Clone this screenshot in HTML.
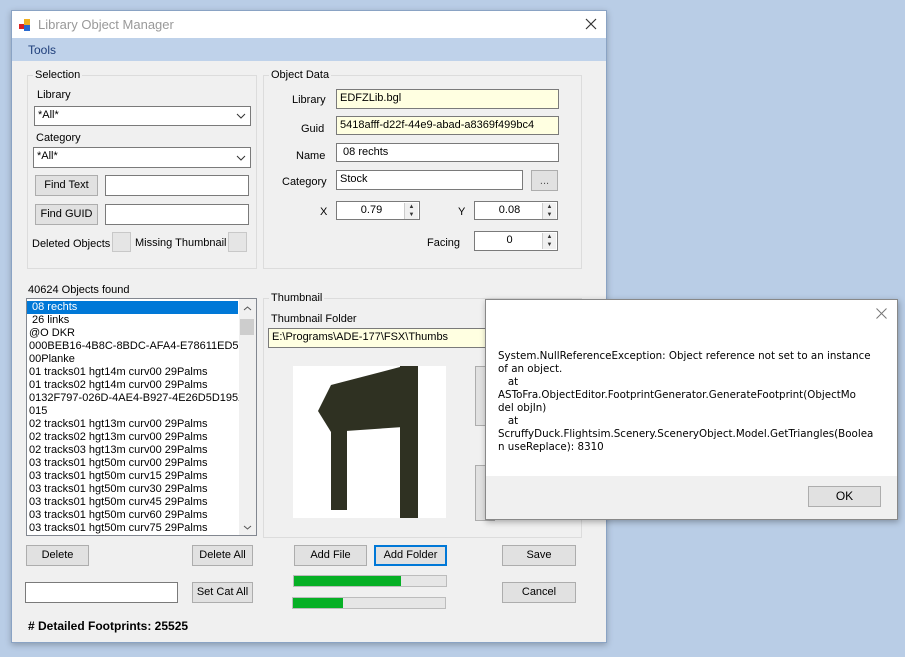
<!DOCTYPE html>
<html><head><meta charset="utf-8"><style>
*{box-sizing:border-box;margin:0;padding:0}
body{width:905px;height:657px;background:#b9cde6;position:relative;overflow:hidden;font-family:"Liberation Sans",sans-serif;font-size:11px;color:#000}
.a{position:absolute}
.t{position:absolute;white-space:nowrap;line-height:14px}
.btn{position:absolute;background:#e1e1e1;border:1px solid #adadad;text-align:center;line-height:18px;font-size:11px;padding:0 1px}
.tb{position:absolute;background:#fff;border:1px solid #7a7a7a;line-height:17px;padding-left:3px}
.y{background:#ffffe1}
.grp{position:absolute;border:1px solid #dcdcdc}
.gl{position:absolute;background:#f0f0f0;padding:0 2px;line-height:14px;top:-8px;left:6px}
.chk{position:absolute;width:19px;height:20px;background:#e5e5e5;border:1px solid #c8c8c8}
.spin{position:absolute;right:1px;top:1px;width:14px;height:16px;background:#f0f0f0;border-left:1px solid #ccc;font-size:6px;line-height:8px;text-align:center;color:#333}
.row{height:13px;line-height:13px;padding-left:2px;white-space:nowrap}
</style></head><body>
<div class="a" style="left:11px;top:10px;width:596px;height:633px;background:#f0f0f0;border:1px solid #8aa3c4;box-shadow:0 2px 6px rgba(0,0,0,.25)">
 <div class="a" style="left:0;top:0;width:594px;height:27px;background:#fff"></div>
 <svg class="a" style="left:6px;top:7px" width="14" height="14"><rect x="0" y="0" width="14" height="14" fill="#fff"/><rect x="1" y="6" width="5" height="5" fill="#d22"/><rect x="6" y="1" width="6" height="6" fill="#f0b020"/><rect x="6" y="7" width="6" height="6" fill="#2a6ad0"/></svg>
 <div class="t" style="left:26px;top:7px;font-size:13px;color:#999">Library Object Manager</div>
 <svg class="a" style="left:573px;top:7px" width="12" height="12"><path d="M1 1L11 11M11 1L1 11" stroke="#333" stroke-width="1.2"/></svg>
 <div class="a" style="left:0;top:27px;width:594px;height:23px;background:#bfd2ea"></div>
 <div class="t" style="left:16px;top:32px;color:#1e3e7a;font-size:12px">Tools</div>
</div>
<div class="grp" style="left:27px;top:75px;width:230px;height:194px"><div class="gl" style="left:5px">Selection</div></div>
<div class="t" style="left:37px;top:88px">Library</div>
<div class="tb" style="left:34px;top:106px;width:217px;height:20px">*All*</div>
<svg class="a" style="left:236px;top:113px" width="10" height="6"><path d="M1 1L5 5L9 1" stroke="#333" fill="none"/></svg>
<div class="t" style="left:36px;top:131px">Category</div>
<div class="tb" style="left:33px;top:147px;width:218px;height:21px">*All*</div>
<svg class="a" style="left:236px;top:155px" width="10" height="6"><path d="M1 1L5 5L9 1" stroke="#333" fill="none"/></svg>
<div class="btn" style="left:35px;top:175px;width:63px;height:21px">Find Text</div>
<div class="tb" style="left:105px;top:175px;width:144px;height:21px"></div>
<div class="btn" style="left:35px;top:204px;width:63px;height:21px">Find GUID</div>
<div class="tb" style="left:105px;top:204px;width:144px;height:21px"></div>
<div class="t" style="left:32px;top:237px">Deleted Objects</div>
<div class="chk" style="left:112px;top:232px"></div>
<div class="t" style="left:135px;top:236px">Missing Thumbnail</div>
<div class="chk" style="left:228px;top:232px"></div>
<div class="grp" style="left:263px;top:75px;width:319px;height:194px"><div class="gl" style="left:5px">Object Data</div></div>
<div class="t" style="left:292px;top:93px">Library</div>
<div class="tb y" style="left:336px;top:89px;width:223px;height:20px">EDFZLib.bgl</div>
<div class="t" style="left:301px;top:122px">Guid</div>
<div class="tb y" style="left:336px;top:116px;width:223px;height:19px">5418afff-d22f-44e9-abad-a8369f499bc4</div>
<div class="t" style="left:296px;top:149px">Name</div>
<div class="tb" style="left:336px;top:143px;width:223px;height:19px">&nbsp;08 rechts</div>
<div class="t" style="left:282px;top:175px">Category</div>
<div class="tb" style="left:336px;top:170px;width:187px;height:20px">Stock</div>
<div class="btn" style="left:531px;top:170px;width:27px;height:21px;line-height:20px;color:#555">...</div>
<div class="t" style="left:320px;top:205px">X</div>
<div class="tb" style="left:336px;top:201px;width:84px;height:19px;text-align:center;padding-right:16px">0.79<div class="spin">▲<br>▼</div></div>
<div class="t" style="left:458px;top:205px">Y</div>
<div class="tb" style="left:474px;top:201px;width:84px;height:19px;text-align:center;padding-right:16px">0.08<div class="spin">▲<br>▼</div></div>
<div class="t" style="left:427px;top:236px">Facing</div>
<div class="tb" style="left:474px;top:231px;width:84px;height:20px;text-align:center;padding-right:16px">0<div class="spin">▲<br>▼</div></div>
<div class="t" style="left:28px;top:283px">40624 Objects found</div>
<div class="a" style="left:26px;top:298px;width:231px;height:238px;background:#fff;border:1px solid #828790;overflow:hidden">
 <div style="padding-top:2px;width:211px">
 <div class="row" style="background:#0078d7;color:#fff;padding-left:5px">08 rechts</div>
 <div class="row" style="padding-left:5px">26 links</div>
 <div class="row">@O DKR</div>
 <div class="row">000BEB16-4B8C-8BDC-AFA4-E78611ED5C</div>
 <div class="row">00Planke</div>
 <div class="row">01 tracks01 hgt14m curv00 29Palms</div>
 <div class="row">01 tracks02 hgt14m curv00 29Palms</div>
 <div class="row">0132F797-026D-4AE4-B927-4E26D5D1952</div>
 <div class="row">015</div>
 <div class="row">02 tracks01 hgt13m curv00 29Palms</div>
 <div class="row">02 tracks02 hgt13m curv00 29Palms</div>
 <div class="row">02 tracks03 hgt13m curv00 29Palms</div>
 <div class="row">03 tracks01 hgt50m curv00 29Palms</div>
 <div class="row">03 tracks01 hgt50m curv15 29Palms</div>
 <div class="row">03 tracks01 hgt50m curv30 29Palms</div>
 <div class="row">03 tracks01 hgt50m curv45 29Palms</div>
 <div class="row">03 tracks01 hgt50m curv60 29Palms</div>
 <div class="row">03 tracks01 hgt50m curv75 29Palms</div>
 </div>
 <div class="a" style="right:0;top:0;width:17px;height:236px;background:#f0f0f0"></div>
 <div class="a" style="right:2px;top:20px;width:14px;height:16px;background:#cdcdcd"></div>
 <svg class="a" style="right:4px;top:7px" width="9" height="5"><path d="M1 4L4.5 1L8 4" stroke="#555" fill="none"/></svg>
 <svg class="a" style="right:4px;top:226px" width="9" height="5"><path d="M1 1L4.5 4L8 1" stroke="#555" fill="none"/></svg>
</div>
<div class="grp" style="left:263px;top:298px;width:319px;height:240px"><div class="gl" style="left:5px">Thumbnail</div></div>
<div class="t" style="left:271px;top:312px">Thumbnail Folder</div>
<div class="tb y" style="left:268px;top:328px;width:230px;height:20px">E:\Programs\ADE-177\FSX\Thumbs</div>
<svg class="a" style="left:293px;top:366px" width="153" height="152">
 <rect width="153" height="152" fill="#fff"/>
 <polygon points="38,19 107,1 125,0 125,60 38,66 25,45" fill="#2f3122"/>
 <rect x="38" y="40" width="16" height="104" fill="#2f3122"/>
 <rect x="107" y="0" width="18" height="152" fill="#2f3122"/>
</svg>
<div class="a" style="left:475px;top:366px;width:20px;height:60px;background:#e1e1e1;border:1px solid #adadad"></div>
<div class="a" style="left:475px;top:465px;width:20px;height:56px;background:#e1e1e1;border:1px solid #adadad"></div>
<div class="btn" style="left:26px;top:545px;width:63px;height:21px">Delete</div>
<div class="btn" style="left:192px;top:545px;width:61px;height:21px">Delete All</div>
<div class="btn" style="left:294px;top:545px;width:73px;height:21px">Add File</div>
<div class="btn" style="left:374px;top:545px;width:73px;height:21px;border:2px solid #0078d7;line-height:17px">Add Folder</div>
<div class="btn" style="left:502px;top:545px;width:74px;height:21px">Save</div>
<div class="tb" style="left:25px;top:582px;width:153px;height:21px"></div>
<div class="btn" style="left:192px;top:582px;width:61px;height:21px">Set Cat All</div>
<div class="btn" style="left:502px;top:582px;width:74px;height:21px">Cancel</div>
<div class="a" style="left:293px;top:575px;width:154px;height:12px;background:#e6e6e6;border:1px solid #bcbcbc"><div style="width:107px;height:10px;background:#06b025"></div></div>
<div class="a" style="left:292px;top:597px;width:154px;height:12px;background:#e6e6e6;border:1px solid #bcbcbc"><div style="width:50px;height:10px;background:#06b025"></div></div>
<div class="t" style="left:28px;top:619px;font-weight:bold;font-size:12px">#&nbsp;Detailed Footprints: 25525</div>
<div class="a" style="left:485px;top:299px;width:413px;height:221px;background:#fff;border:1px solid #888;box-shadow:1px 2px 6px rgba(0,0,0,.3)">
 <svg class="a" style="left:390px;top:8px" width="11" height="11"><path d="M0.5 0.5L10.5 10.5M10.5 0.5L0.5 10.5" stroke="#777" stroke-width="1"/></svg>
 <div class="a" style="left:12px;top:50px;width:390px;line-height:13px;white-space:pre;font-family:'DejaVu Sans','Liberation Sans',sans-serif;font-size:10.3px">System.NullReferenceException: Object reference not set to an instance
of an object.
   at
ASToFra.ObjectEditor.FootprintGenerator.GenerateFootprint(ObjectMo
del objIn)
   at
ScruffyDuck.Flightsim.Scenery.SceneryObject.Model.GetTriangles(Boolea
n useReplace): 8310</div>
 <div class="a" style="left:0;top:176px;width:411px;height:43px;background:#f0f0f0"></div>
 <div class="btn" style="left:322px;top:186px;width:73px;height:21px;font-size:12px">OK</div>
</div>
</body></html>
